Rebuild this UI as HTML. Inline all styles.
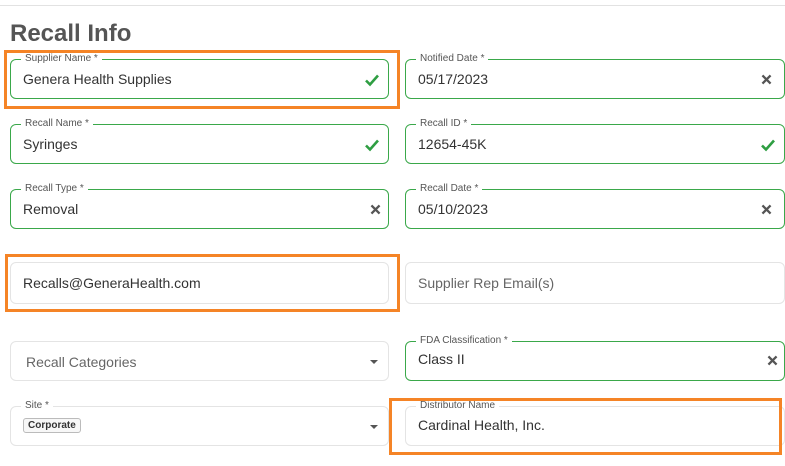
<!DOCTYPE html>
<html><head><style>
*{box-sizing:border-box;margin:0;padding:0}
body{width:785px;height:466px;background:#fff;font-family:"Liberation Sans",sans-serif;position:relative;overflow:hidden;color:#333}
.line{position:absolute;left:0;top:5px;width:785px;height:1px;background:#e2e2e2}
h1{position:absolute;left:10px;top:20px;font-size:24px;font-weight:bold;color:#555}
.f{position:absolute;height:40px;border:1px solid #e4e4e4;border-radius:6px;background:#fff}
.g{border-color:#3aa84a}
.lbl{position:absolute;top:-7px;left:10px;background:#fff;padding:0 4px;font-size:10px;color:#555;line-height:12px}
.v{position:absolute;left:12px;top:11px;font-size:14px;color:#333}
.ph{color:#666}
.ic{position:absolute;right:8px;top:12px}
.ob{position:absolute;border:3px solid #f58426}
.caret{position:absolute;right:10px;top:18px;width:0;height:0;border-left:4px solid transparent;border-right:4px solid transparent;border-top:4px solid #555}
.chip{position:absolute;left:12px;top:11px;border:1px solid #bbb;border-radius:3px;font-size:10px;font-weight:bold;padding:1px 4px;color:#333;background:#f7f7f7}
</style></head><body>
<div class="line"></div>
<h1>Recall Info</h1>
<svg width="0" height="0" style="position:absolute"><defs>
<symbol id="chk" viewBox="0 0 16 16"><path d="M2 8.5l4 4 8-9" fill="none" stroke="#2e9e42" stroke-width="2.6"/></symbol>
<symbol id="x" viewBox="0 0 16 16"><path d="M3 3l10 10M13 3l-10 10" fill="none" stroke="#555" stroke-width="2.8"/></symbol>
</defs></svg>

<div class="f g" style="left:10px;top:59px;width:379px"><span class="lbl">Supplier Name *</span><span class="v">Genera Health Supplies</span><svg class="ic" width="16" height="16"><use href="#chk"/></svg></div>
<div class="f g" style="left:405px;top:59px;width:380px"><span class="lbl">Notified Date *</span><span class="v">05/17/2023</span><svg class="ic" style="right:11px;top:13px" width="13" height="13"><use href="#x"/></svg></div>

<div class="f g" style="left:10px;top:124px;width:379px"><span class="lbl">Recall Name *</span><span class="v">Syringes</span><svg class="ic" width="16" height="16"><use href="#chk"/></svg></div>
<div class="f g" style="left:405px;top:124px;width:380px"><span class="lbl">Recall ID *</span><span class="v">12654-45K</span><svg class="ic" width="16" height="16"><use href="#chk"/></svg></div>

<div class="f g" style="left:10px;top:189px;width:379px"><span class="lbl">Recall Type *</span><span class="v">Removal</span><svg class="ic" style="right:6px;top:13px" width="13" height="13"><use href="#x"/></svg></div>
<div class="f g" style="left:405px;top:189px;width:380px"><span class="lbl">Recall Date *</span><span class="v">05/10/2023</span><svg class="ic" style="right:11px;top:13px" width="13" height="13"><use href="#x"/></svg></div>

<div class="f" style="left:10px;top:262px;width:379px;height:42px"><span class="v" style="top:12px">Recalls@GeneraHealth.com</span></div>
<div class="f" style="left:405px;top:262px;width:380px;height:42px"><span class="v ph" style="top:12px">Supplier Rep Email(s)</span></div>

<div class="f" style="left:10px;top:341px;width:379px;height:40px"><span class="v ph" style="left:15px;top:12px">Recall Categories</span><div class="caret"></div></div>
<div class="f g" style="left:405px;top:341px;width:380px"><span class="lbl">FDA Classification *</span><span class="v" style="top:9px">Class II</span><svg class="ic" style="right:5px;top:12px" width="13" height="13"><use href="#x"/></svg></div>

<div class="f" style="left:10px;top:406px;width:379px"><span class="lbl">Site *</span><span class="chip">Corporate</span><div class="caret"></div></div>
<div class="f" style="left:405px;top:406px;width:380px"><span class="lbl">Distributor Name</span><span class="v" style="top:10px">Cardinal Health, Inc.</span></div>

<div class="ob" style="left:4px;top:50px;width:396px;height:59px"></div>
<div class="ob" style="left:5px;top:254px;width:395px;height:58px"></div>
<div class="ob" style="left:389px;top:398px;width:393px;height:57px"></div>
</body></html>
